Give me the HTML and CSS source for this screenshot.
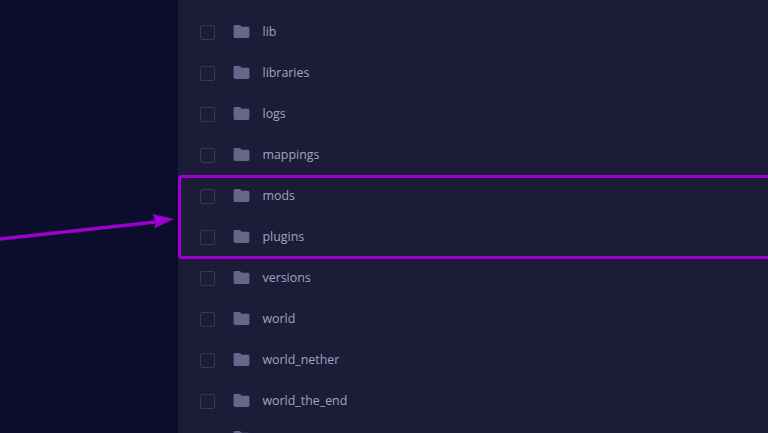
FILE: index.html
```html
<!DOCTYPE html>
<html lang="en">
<head>
    <meta charset="UTF-8">
    <title>File manager</title>
    <link rel="stylesheet" href="styles.css">
</head>
<body>
    <svg width="0" height="0" class="defs">
        <symbol id="folder" viewBox="0 0 17 14">
            <path d="M1.5 0H6.2C6.9 0 7.3.3 7.7.8L8.6 2H15.5C16.3 2 17 2.7 17 3.5V12.5C17 13.3 16.3 14 15.5 14H1.5C.7 14 0 13.3 0 12.5V1.5C0 .7.7 0 1.5 0Z"/>
        </symbol>
    </svg>
    <div class="layout">
        <aside class="sidebar"></aside>
        <main class="files">
            <div class="row"><span class="check"></span><svg class="folder"><use href="#folder"/></svg><span class="name">lib</span></div>
            <div class="row"><span class="check"></span><svg class="folder"><use href="#folder"/></svg><span class="name">libraries</span></div>
            <div class="row"><span class="check"></span><svg class="folder"><use href="#folder"/></svg><span class="name">logs</span></div>
            <div class="row"><span class="check"></span><svg class="folder"><use href="#folder"/></svg><span class="name">mappings</span></div>
            <div class="row"><span class="check"></span><svg class="folder"><use href="#folder"/></svg><span class="name">mods</span></div>
            <div class="row"><span class="check"></span><svg class="folder"><use href="#folder"/></svg><span class="name">plugins</span></div>
            <div class="row"><span class="check"></span><svg class="folder"><use href="#folder"/></svg><span class="name">versions</span></div>
            <div class="row"><span class="check"></span><svg class="folder"><use href="#folder"/></svg><span class="name">world</span></div>
            <div class="row"><span class="check"></span><svg class="folder"><use href="#folder"/></svg><span class="name">world_nether</span></div>
            <div class="row"><span class="check"></span><svg class="folder"><use href="#folder"/></svg><span class="name">world_the_end</span></div>
            <div class="row row-cut"><span class="check"></span><svg class="folder"><use href="#folder"/></svg><span class="name"></span></div>
        </main>
    </div>

    <!-- annotation on top of the screenshot -->
    <div class="highlight"></div>
    <svg class="arrow" width="178" height="433" viewBox="0 0 178 433">
        <path d="M0 239L160 221.5" stroke="#9d00d0" stroke-width="3.6" fill="none"/>
        <path d="M174 219L152.500 214L156 222L154 228.500Z" fill="#9d00d0"/>
    </svg>
</body>
</html>
```

FILE: styles.css
```css
html, body {
    margin: 0;
    height: 100%;
    overflow: hidden;
    background-color: #0c0c2c;
}

.defs {
    position: absolute;
}

.layout {
    display: flex;
    height: 433px;
    overflow: hidden;
}

.sidebar {
    width: 178px;
    flex-shrink: 0;
    background-color: #0c0c2c;
}

.files {
    flex: 1;
    padding-top: 10px;
    background-color: #1c1c38;
}

.row {
    display: flex;
    align-items: center;
    height: 41px;
    padding-left: 22px;
}

.check {
    width: 13px;
    height: 13px;
    margin-top: 4px;
    border: 1px solid #383852;
    border-radius: 2px;
}

.folder {
    width: 17px;
    height: 13px;
    margin-left: 17.500px;
    margin-top: 1px;
    fill: #66668a;
}

.row-cut .folder {
    margin-top: -6px;
}

.name {
    margin-left: 13px;
    margin-top: 1px;
    font-family: "Open Sans", sans-serif;
    font-size: 12.400px;
    color: #a3a3bd;
}

.highlight {
    position: absolute;
    left: 178px;
    top: 175px;
    width: 620px;
    height: 78px;
    border: 3px solid #9d00d0;
    border-radius: 4px;
}

.arrow {
    position: absolute;
    left: 0;
    top: 0;
}
```
